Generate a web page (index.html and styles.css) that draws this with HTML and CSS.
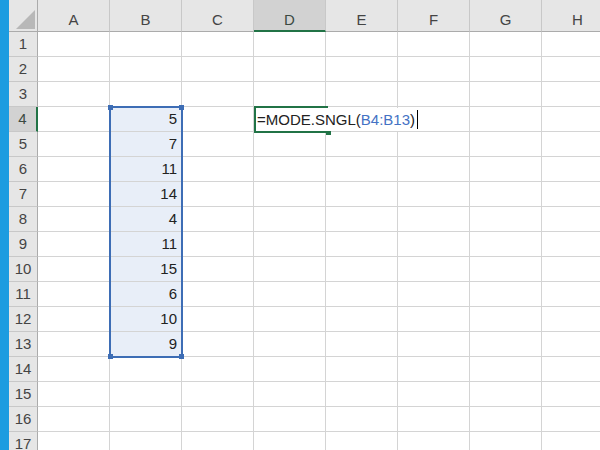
FILE: index.html
```html
<!DOCTYPE html>
<html>
<head>
<meta charset="utf-8">
<link rel="stylesheet" href="styles.css">
</head>
<body>
<div class="app">
  <div class="strip"></div>
  <div class="sheet">
    <div class="grid">
      <div class="corner"></div><div class="ch">A</div><div class="ch">B</div><div class="ch">C</div><div class="ch sel">D</div><div class="ch">E</div><div class="ch">F</div><div class="ch">G</div><div class="ch">H</div>
      <div class="rh">1</div><div class="c"></div><div class="c"></div><div class="c"></div><div class="c"></div><div class="c"></div><div class="c"></div><div class="c"></div><div class="c"></div>
      <div class="rh">2</div><div class="c"></div><div class="c"></div><div class="c"></div><div class="c"></div><div class="c"></div><div class="c"></div><div class="c"></div><div class="c"></div>
      <div class="rh">3</div><div class="c"></div><div class="c"></div><div class="c"></div><div class="c"></div><div class="c"></div><div class="c"></div><div class="c"></div><div class="c"></div>
      <div class="rh sel">4</div><div class="c"></div><div class="c rng">5</div><div class="c"></div><div class="c"></div><div class="c"></div><div class="c"></div><div class="c"></div><div class="c"></div>
      <div class="rh">5</div><div class="c"></div><div class="c rng">7</div><div class="c"></div><div class="c"></div><div class="c"></div><div class="c"></div><div class="c"></div><div class="c"></div>
      <div class="rh">6</div><div class="c"></div><div class="c rng">11</div><div class="c"></div><div class="c"></div><div class="c"></div><div class="c"></div><div class="c"></div><div class="c"></div>
      <div class="rh">7</div><div class="c"></div><div class="c rng">14</div><div class="c"></div><div class="c"></div><div class="c"></div><div class="c"></div><div class="c"></div><div class="c"></div>
      <div class="rh">8</div><div class="c"></div><div class="c rng">4</div><div class="c"></div><div class="c"></div><div class="c"></div><div class="c"></div><div class="c"></div><div class="c"></div>
      <div class="rh">9</div><div class="c"></div><div class="c rng">11</div><div class="c"></div><div class="c"></div><div class="c"></div><div class="c"></div><div class="c"></div><div class="c"></div>
      <div class="rh">10</div><div class="c"></div><div class="c rng">15</div><div class="c"></div><div class="c"></div><div class="c"></div><div class="c"></div><div class="c"></div><div class="c"></div>
      <div class="rh">11</div><div class="c"></div><div class="c rng">6</div><div class="c"></div><div class="c"></div><div class="c"></div><div class="c"></div><div class="c"></div><div class="c"></div>
      <div class="rh">12</div><div class="c"></div><div class="c rng">10</div><div class="c"></div><div class="c"></div><div class="c"></div><div class="c"></div><div class="c"></div><div class="c"></div>
      <div class="rh">13</div><div class="c"></div><div class="c rng">9</div><div class="c"></div><div class="c"></div><div class="c"></div><div class="c"></div><div class="c"></div><div class="c"></div>
      <div class="rh">14</div><div class="c"></div><div class="c"></div><div class="c"></div><div class="c"></div><div class="c"></div><div class="c"></div><div class="c"></div><div class="c"></div>
      <div class="rh">15</div><div class="c"></div><div class="c"></div><div class="c"></div><div class="c"></div><div class="c"></div><div class="c"></div><div class="c"></div><div class="c"></div>
      <div class="rh">16</div><div class="c"></div><div class="c"></div><div class="c"></div><div class="c"></div><div class="c"></div><div class="c"></div><div class="c"></div><div class="c"></div>
      <div class="rh">17</div><div class="c"></div><div class="c"></div><div class="c"></div><div class="c"></div><div class="c"></div><div class="c"></div><div class="c"></div><div class="c"></div>
    </div>
    <div class="range">
      <span class="hd tl"></span><span class="hd tr"></span><span class="hd bl"></span><span class="hd br"></span>
    </div>
    <div class="edittext">=MODE.SNGL(<span class="ref">B4:B13</span>)<span class="caret"></span></div>
    <div class="editframe"><span class="fill"></span></div>
  </div>
</div>
</body>
</html>
```
FILE: styles.css
```css
html, body {
  margin: 0;
  height: 100%;
  overflow: hidden;
  background: #fff;
  font-family: "Liberation Sans", Arial, sans-serif;
}
.app {
  display: flex;
  height: 450px;
}
.strip {
  flex: none;
  width: 9px;
  background: #1c9ce0;
}
.sheet {
  position: relative;
  flex: 1;
  overflow: hidden;
}
.grid {
  display: grid;
  grid-template-columns: 29px repeat(8, 72px);
  grid-template-rows: 32px repeat(17, 25px);
}
.grid > div {
  box-sizing: border-box;
  font-size: 15px;
}
.corner {
  position: relative;
  background: #e6e6e6;
  border-right: 1px solid #ababab;
  border-bottom: 1px solid #ababab;
}
.corner::after {
  content: "";
  position: absolute;
  right: 2px;
  bottom: 2px;
  width: 19px;
  height: 19px;
  background: #b8b8b8;
  clip-path: polygon(100% 0, 100% 100%, 0 100%);
}
.ch {
  background: #e6e6e6;
  border-right: 1px solid #c8c8c8;
  border-bottom: 1px solid #ababab;
  color: #444;
  text-align: center;
  padding-top: 11px;
  line-height: 17px;
}
.ch.sel {
  background: #d2d2d2;
  border-bottom: 2px solid #217346;
  color: #3b4a42;
}
.rh {
  background: #e6e6e6;
  border-right: 1px solid #ababab;
  border-bottom: 1px solid #c8c8c8;
  color: #444;
  text-align: center;
  line-height: 24px;
}
.rh.sel {
  background: #d2d2d2;
  border-right: 2px solid #217346;
  color: #3b4a42;
}
.c {
  border-right: 1px solid #d4d4d4;
  border-bottom: 1px solid #d4d4d4;
  color: #222;
  text-align: right;
  padding-right: 4px;
  line-height: 24px;
}
.c.rng {
  background: #e8eef8;
}
.range {
  position: absolute;
  left: 100px;
  top: 106px;
  width: 74px;
  height: 252px;
  border: 2px solid #3d6db5;
  box-sizing: border-box;
}
.hd {
  position: absolute;
  width: 5px;
  height: 5px;
  background: #3d6db5;
}
.hd.tl { left: -3px; top: -3px; }
.hd.tr { right: -3px; top: -3px; }
.hd.bl { left: -3px; bottom: -3px; }
.hd.br { right: -3px; bottom: -3px; }
.editframe {
  position: absolute;
  left: 245px;
  top: 106px;
  width: 74px;
  height: 27px;
  box-sizing: border-box;
  border: 2px solid #217346;
  border-right: none;
}
.fill {
  position: absolute;
  right: -3px;
  bottom: -4px;
  width: 5px;
  height: 4px;
  background: #217346;
}
.edittext {
  position: absolute;
  left: 247px;
  top: 108px;
  height: 23px;
  padding: 0 4px 0 1px;
  background: #fff;
  color: #222;
  font-size: 15px;
  line-height: 23px;
  white-space: nowrap;
}
.ref {
  color: #4472c4;
}
.caret {
  display: inline-block;
  width: 1px;
  height: 19px;
  margin-left: 2px;
  background: #000;
  vertical-align: -4px;
}
```
